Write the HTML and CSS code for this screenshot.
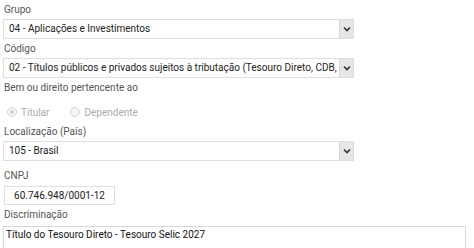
FILE: index.html
```html
<!DOCTYPE html>
<html lang="pt-BR">
<head>
<meta charset="utf-8">
<link rel="stylesheet" href="styles.css">
</head>
<body>
<form class="form">
  <div class="field">
    <label class="label">Grupo</label>
    <div class="select">
      <span class="select-value">04 - Aplicações e Investimentos</span>
      <span class="select-arrow"><svg width="8" height="6" viewBox="0 0 8 6"><path d="M1 1.5 L4 4.5 L7 1.5" fill="none" stroke="#333" stroke-width="1.6"/></svg></span>
    </div>
  </div>
  <div class="field">
    <label class="label">Código</label>
    <div class="select">
      <span class="select-value">02 - Títulos públicos e privados sujeitos à tributação (Tesouro Direto, CDB,</span>
      <span class="select-arrow"><svg width="8" height="6" viewBox="0 0 8 6"><path d="M1 1.5 L4 4.5 L7 1.5" fill="none" stroke="#333" stroke-width="1.6"/></svg></span>
    </div>
  </div>
  <div class="field">
    <label class="label">Bem ou direito pertencente ao</label>
    <div class="radios">
      <span class="radio"><span class="radio-dot checked"></span>Titular</span>
      <span class="radio"><span class="radio-dot"></span>Dependente</span>
    </div>
  </div>
  <div class="field">
    <label class="label">Localização (País)</label>
    <div class="select">
      <span class="select-value">105 - Brasil</span>
      <span class="select-arrow"><svg width="8" height="6" viewBox="0 0 8 6"><path d="M1 1.5 L4 4.5 L7 1.5" fill="none" stroke="#333" stroke-width="1.6"/></svg></span>
    </div>
  </div>
  <div class="field">
    <label class="label label-cnpj">CNPJ</label>
    <div class="input-cnpj">60.746.948/0001-12</div>
  </div>
  <div class="field">
    <label class="label">Discriminação</label>
    <div class="textarea">Título do Tesouro Direto - Tesouro Selic 2027</div>
  </div>
</form>
</body>
</html>
```
FILE: styles.css
```css
html, body {
  margin: 0;
  padding: 0;
  background: #fff;
  overflow: hidden;
}
body {
  font-family: Roboto, "Liberation Sans", sans-serif;
  font-size: 10px;
  color: #333;
}
.form {
  padding: 0 0 0 3px;
  display: flex;
  flex-direction: column;
}
.label {
  display: block;
  height: 19px;
  line-height: 19px;
  padding-left: 1px;
  color: #555;
}
.select {
  display: flex;
  width: 351px;
  height: 20px;
  box-sizing: border-box;
  border: 1px solid #dedede;
  background: #fff;
}
.select-value {
  flex: 1;
  min-width: 0;
  overflow: hidden;
  white-space: nowrap;
  padding-left: 5px;
  line-height: 18px;
  color: #222;
}
.select-arrow {
  width: 13px;
  display: flex;
  align-items: center;
  justify-content: center;
  background: #e6e6e6;
  border-left: 1px solid #d6d6d6;
}
.radios {
  display: flex;
  gap: 21px;
  height: 20px;
  padding-top: 5px;
  align-items: center;
  padding-left: 4px;
  color: #aaa;
}
.radio {
  display: flex;
  align-items: center;
  gap: 4px;
}
.radio-dot {
  width: 10px;
  height: 10px;
  box-sizing: border-box;
  border: 1px solid #d4d4d4;
  border-radius: 50%;
  background: #f6f6f6;
  display: flex;
  align-items: center;
  justify-content: center;
}
.radio-dot.checked::after {
  content: "";
  width: 4px;
  height: 4px;
  border-radius: 50%;
  background: #cfcfcf;
}
.label-cnpj {
  margin-top: 4px;
  height: 21px;
  line-height: 21px;
}
.input-cnpj {
  width: 111px;
  height: 19px;
  box-sizing: border-box;
  margin-left: 1px;
  border: 1px solid #dedede;
  text-align: center;
  line-height: 17px;
  color: #222;
}
.textarea {
  width: 463px;
  height: 40px;
  box-sizing: border-box;
  margin-top: 2px;
  border: 1px solid #d8d8d8;
  padding: 1px 2px;
  line-height: 14px;
  color: #111;
}
```
